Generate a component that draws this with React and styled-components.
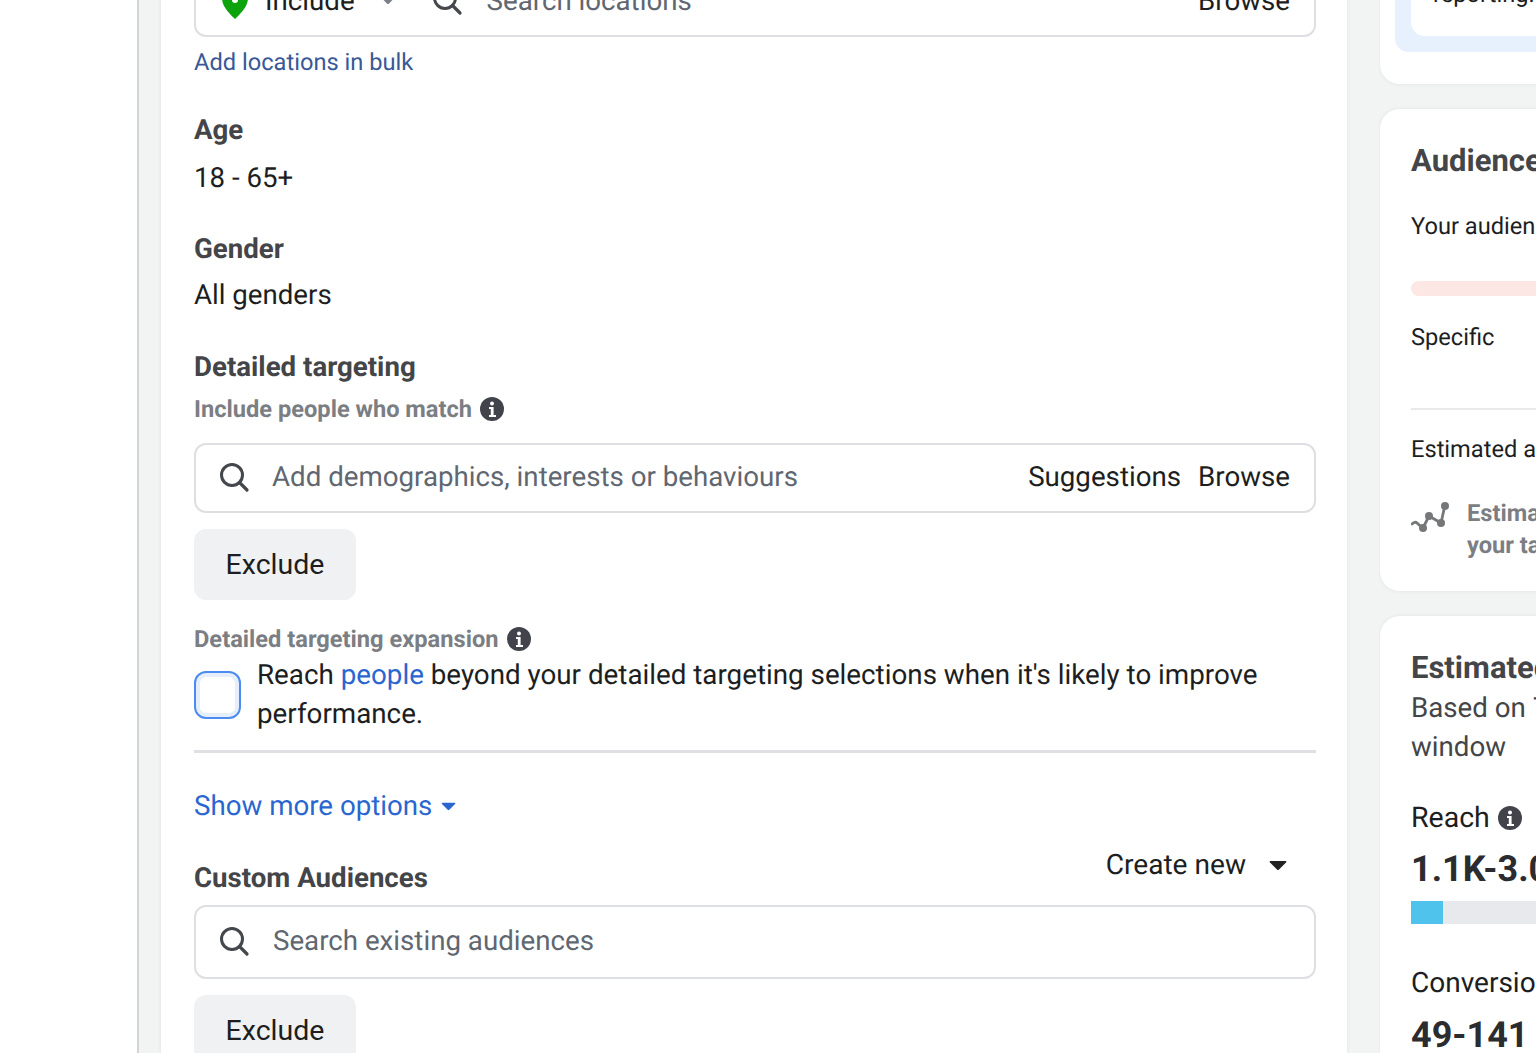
import React from "react";
import styled, { createGlobalStyle } from "styled-components";

const Global = createGlobalStyle`
  html, body { margin: 0; padding: 0; background: #fff; }
  body { font-family: Roboto, "Liberation Sans", sans-serif; color: #1c1e21; text-rendering: geometricPrecision; }
  * { box-sizing: border-box; }
`;
const Page = styled.div`display: flex; width: 1536px; height: 1053px; overflow: hidden; background: #fff;`;
const Rail = styled.div`width: 139px; flex: none; background: #fff; border-right: 2px solid #d3d5d8;`;
const Canvas = styled.div`flex: 1; min-width: 0; display: flex; gap: 33px; padding-left: 22px; background: #f2f3f3; align-items: flex-start;`;
const MainCard = styled.main`width: 1186px; flex: none; background: #fff; padding: 0 31px 120px 33px; margin-top: -34px; box-shadow: 0 0 4px rgba(0,0,0,.07);`;
const Field = styled.div`
  display: flex; align-items: center; height: ${p => p.$h || 70}px; margin-top: ${p => p.$mt || 0}px; padding: 0 24px 3px 22px;
  border: 2px solid #dddfe3; border-radius: 12px; font-size: 27.7px; color: #1c1e21;
`;
const Placeholder = styled.span`color: #606770; margin-left: ${p => p.$ml || 22}px; flex: 1; white-space: nowrap;`;
const Action = styled.span`color: #1c1e21; margin-left: 17px; white-space: nowrap;`;
const IncludeLabel = styled.span`margin-left: 17px; margin-right: 25px; color: #1c1e21;`;
const Spacer = styled.span`flex: none; width: ${p => p.$w}px;`;
const Caret = styled.svg`display: block; flex: none;`;
const Link = styled.a`display: block; color: #385898; font-size: 23.65px; line-height: 30px; margin-top: 10px;`;
const Heading = styled.h3`margin: ${p => p.$mt || 0}px 0 0; font-size: 27.65px; line-height: 34px; font-weight: 700; color: #444548;`;
const Value = styled.div`font-size: 27.65px; line-height: 36px; margin-top: ${p => p.$mt || 13}px; color: #1c1e21;`;
const SubLabel = styled.div`display: flex; align-items: center; gap: 8px; font-size: 23.65px; line-height: 30px; font-weight: 700; color: #7b7e83; margin-top: ${p => p.$mt || 0}px;`;
const GhostButton = styled.button`
  display: flex; align-items: center; justify-content: center; width: 162px; height: 71px; margin-top: 16px; padding: 0 0 1px;
  border: 0; border-radius: 12px; background: #f0f1f2; font: 400 28.5px Roboto, sans-serif; color: #1c1e21;
`;
const CheckRow = styled.div`display: flex; gap: 16px; margin-top: 1px;`;
const Check = styled.span`flex: none; width: 47px; height: 48px; margin-top: 16px; border: 2px solid #4c8cf0; border-radius: 12px; background: #fff; box-shadow: inset 0 0 0 4px #e6eefb;`;
const CheckText = styled.p`margin: 0; font-size: 27.78px; line-height: 39px; color: #1c1e21;`;
const Inline = styled.span`color: #2a66d0;`;
const Rule = styled.hr`border: 0; height: 3px; background: #dfe0e4; margin: 17px 0 0;`;
const More = styled.div`display: flex; align-items: center; gap: 9px; margin-top: 35px; font-size: 27.7px; line-height: 36px; color: #2a66d0;`;
const SplitRow = styled.div`display: flex; justify-content: space-between; align-items: flex-start; margin-top: 37px; height: 44px;`;
const Create = styled.div`display: flex; align-items: center; gap: 23px; padding-right: 29px; margin-top: -14px; font-size: 28.1px; line-height: 36px; color: #1c1e21;`;
const SideCol = styled.aside`flex: 1; min-width: 0; display: flex; flex-direction: column; gap: 25px; overflow: hidden; padding-left: 1px; margin-left: -1px; margin-top: -40px;`;
const SideCard = styled.section`width: 700px; flex: none; background: #fff; border-radius: 20px 0 0 20px; padding: ${p => p.$pad || "0 0 0 31px"}; height: ${p => p.$h}px; box-shadow: 0 0 4px rgba(0,0,0,.07);`;
const TipOuter = styled.div`height: 92px; padding: 0 0 16px 16px; background: #e7f0fd; border-radius: 0 0 0 14px;`;
const TipInner = styled.div`height: 76px; background: #fff; border-radius: 0 0 0 14px; padding: 0 0 25px 22px; font-size: 23.65px; line-height: 34px; color: #1c1e21; display: flex; align-items: flex-end;`;
const SideTitle = styled.h3`margin: ${p => p.$mt || 0}px 0 0; font-size: 31px; line-height: 38px; font-weight: 700; color: #444548; white-space: nowrap;`;
const SideText = styled.div`margin-top: ${p => p.$mt || 0}px; font-size: ${p => p.$size || 23.65}px; line-height: ${p => p.$lh || 32}px; color: #1c1e21; white-space: nowrap; display: flex; align-items: center; gap: 8px;`;
const Meter = styled.div`height: 15px; width: 500px; border-radius: 8px; background: #fde7e4; margin-top: 39px;`;
const Line = styled.div`height: 2px; width: 500px; background: #e8e9eb; margin-top: 55px;`;
const Estimate = styled.div`display: flex; gap: 16px; align-items: flex-start; margin-top: 32px;`;
const EstimateText = styled.div`font-size: 23.65px; line-height: 32px; font-weight: 700; color: #7b7e83; white-space: nowrap;`;
const Figure = styled.div`font-size: 36px; line-height: 44px; font-weight: 700; color: #2b2c2f; margin-top: ${p => p.$mt || 0}px; white-space: nowrap;`;
const Bar = styled.div`width: 500px; height: 23px; background: #e8e9ec; margin-top: 10px;`;
const BarFill = styled.div`width: 32px; height: 100%; background: #4fc3ec;`;
const Based = styled.div`font-size: 27.7px; line-height: 39px; color: #444548; white-space: nowrap; margin-top: 1px;`;

const Search = ({ size = 32 }) => (
  <svg width={size} height={size} viewBox="0 0 32 32" fill="none" style={{ flex: "none", display: "block" }}>
    <circle cx="14" cy="14" r="10.5" stroke="#44474c" strokeWidth="3" />
    <path d="M21.5 21.5 L29 29" stroke="#44474c" strokeWidth="3.2" strokeLinecap="round" />
  </svg>
);
const Info = ({ size = 24 }) => (
  <svg width={size} height={size} viewBox="0 0 24 24" style={{ flex: "none", display: "block" }}>
    <circle cx="12" cy="12" r="12" fill="#41454b" />
    <circle cx="12" cy="6.4" r="2" fill="#fff" />
    <path d="M9 10h4.6v8H16v2H9v-2h1.8v-6H9z" fill="#fff" />
  </svg>
);
const Pin = () => (
  <svg width="26" height="34" viewBox="0 0 26 34" style={{ flex: "none", display: "block", marginLeft: 4, marginTop: 3 }}>
    <path d="M13 0 C21 0 26 6 26 13 C26 22 18 29 13 34 C8 29 0 22 0 13 C0 6 5 0 13 0 Z" fill="#0da30d" />
    <circle cx="13" cy="15" r="3" fill="#fff" />
  </svg>
);
const Tri = ({ w = 18, h = 11, color = "#222" }) => (
  <Caret width={w} height={h} viewBox="0 0 18 11">
    <path d="M1.5 1 H16.5 Q18 1 17 2.4 L10 9.6 Q9 10.6 8 9.6 L1 2.4 Q0 1 1.5 1 Z" fill={color} />
  </Caret>
);
const Trend = () => (
  <svg width="40" height="34" viewBox="0 0 40 34" fill="none" style={{ flex: "none", display: "block", marginTop: 4 }}>
    <path d="M1 23 Q4 20 6 22 T12 27 L18 15 L30 22 L34 4" stroke="#757779" strokeWidth="2.8" strokeLinecap="round" strokeLinejoin="round" />
    <circle cx="12" cy="27" r="4" fill="#757779" />
    <circle cx="18" cy="15" r="4" fill="#757779" />
    <circle cx="30" cy="22" r="4" fill="#757779" />
    <circle cx="34" cy="5" r="4" fill="#757779" />
  </svg>
);

export default function App() {
  return (
    <Page>
      <Global />
      <Rail />
      <Canvas>
        <MainCard>
          <Field $h={71}>
            <Pin />
            <IncludeLabel>Include</IncludeLabel>
            <Tri w={16} h={10} color="#7b7f8a" />
            <Spacer $w={35} />
            <Search />
            <Placeholder $ml={24}>Search locations</Placeholder>
            <Action>Browse</Action>
          </Field>
          <Link>Add locations in bulk</Link>
          <Heading $mt={36}>Age</Heading>
          <Value>18 - 65+</Value>
          <Heading $mt={36}>Gender</Heading>
          <Value $mt={11}>All genders</Value>
          <Heading $mt={37}>Detailed targeting</Heading>
          <SubLabel $mt={10}>Include people who match <Info /></SubLabel>
          <Field $mt={19}>
            <Search />
            <Placeholder>Add demographics, interests or behaviours</Placeholder>
            <Action>Suggestions</Action>
            <Action>Browse</Action>
          </Field>
          <GhostButton>Exclude</GhostButton>
          <SubLabel $mt={24}>Detailed targeting expansion <Info /></SubLabel>
          <CheckRow>
            <Check />
            <CheckText>Reach <Inline>people</Inline> beyond your detailed targeting selections when it's likely to improve performance.</CheckText>
          </CheckRow>
          <Rule />
          <More>Show more options <Tri w={15} h={9} color="#2a66d0" /></More>
          <SplitRow>
            <Heading>Custom Audiences</Heading>
            <Create>Create new <Tri /></Create>
          </SplitRow>
          <Field $h={74}>
            <Search />
            <Placeholder $ml={23}>Search existing audiences</Placeholder>
          </Field>
          <GhostButton>Exclude</GhostButton>
        </MainCard>
        <SideCol>
          <SideCard $h={124} $pad="0 0 0 15px">
            <TipOuter>
              <TipInner>reporting.</TipInner>
            </TipOuter>
          </SideCard>
          <SideCard $h={482}>
            <SideTitle $mt={33}>Audience definition</SideTitle>
            <SideText $mt={30}>Your audience selection is fairly broad.</SideText>
            <Meter />
            <SideText $mt={25}>Specific</SideText>
            <Line />
            <SideText $mt={23}>Estimated audience size</SideText>
            <Estimate>
              <Trend />
              <EstimateText>Estimated audience size isn't available for<br />your targeting.</EstimateText>
            </Estimate>
          </SideCard>
          <SideCard $h={500}>
            <SideTitle $mt={33}>Estimated daily results</SideTitle>
            <Based>Based on 7-day click<br />window</Based>
            <SideText $mt={34} $size={28.5} $lh={36}>Reach <Info /></SideText>
            <Figure $mt={11}>1.1K-3.0K</Figure>
            <Bar><BarFill /></Bar>
            <SideText $mt={41} $size={28} $lh={36}>Conversions</SideText>
            <Figure $mt={12}>49-141</Figure>
          </SideCard>
        </SideCol>
      </Canvas>
    </Page>
  );
}
